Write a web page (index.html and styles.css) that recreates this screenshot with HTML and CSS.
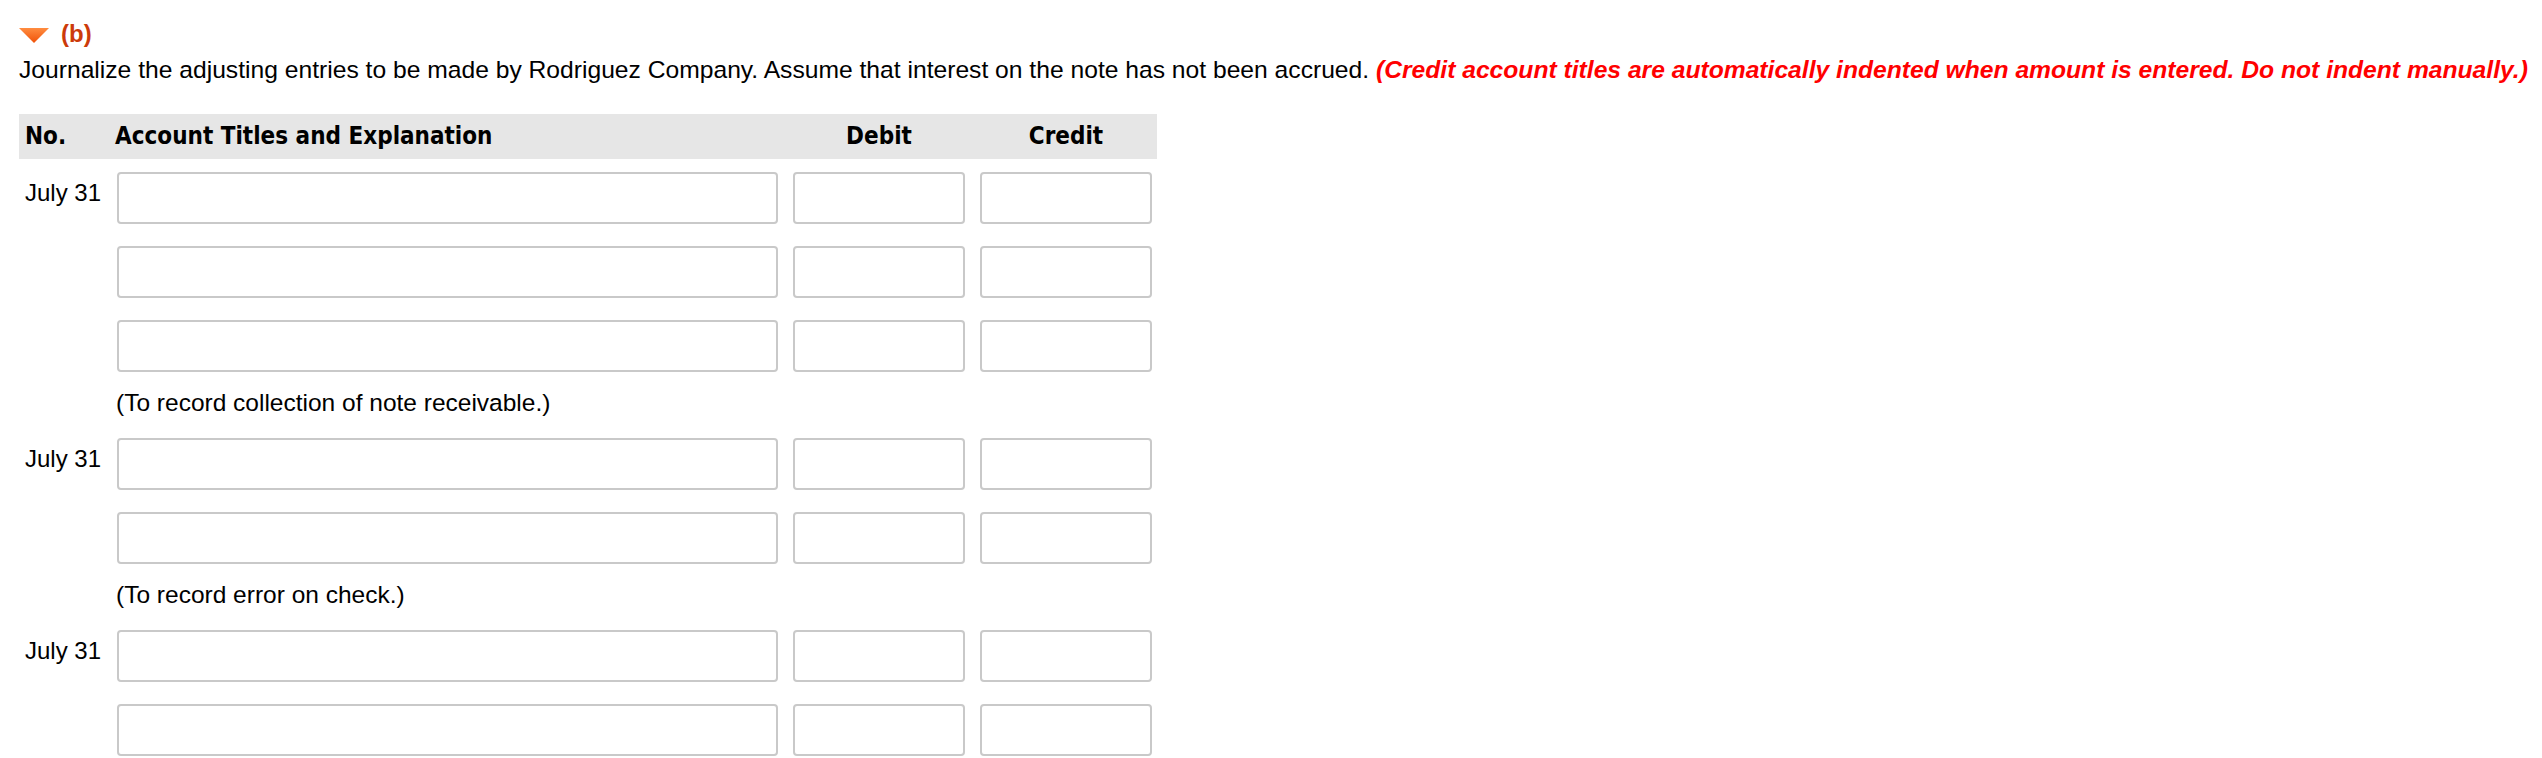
FILE: index.html
```html
<!DOCTYPE html>
<html>
<head>
    <title>Journal entries (b)</title>
    <link rel="stylesheet" href="styles.css">
</head>
<body>
    <div class="part">
        <div class="part-head">
            <svg class="toggle" width="30" height="15" viewBox="0 0 30 15">
                <defs>
                    <linearGradient id="tri" x1="0" y1="0" x2="0" y2="1">
                        <stop offset="0" stop-color="#ff8c40"/>
                        <stop offset="1" stop-color="#f05208"/>
                    </linearGradient>
                </defs>
                <polygon points="0,0 30,0 15,15" fill="url(#tri)"/>
            </svg>
            <span class="part-label">(b)</span>
        </div>

        <p class="instructions">
            Journalize the adjusting entries to be made by Rodriguez Company. Assume that interest on the note has not been accrued.
            <em class="warning">(Credit account titles are automatically indented when amount is entered. Do not indent manually.)</em>
        </p>

        <div class="journal">
            <div class="journal-head">
                <div>No.</div>
                <div class="col-title">Account Titles and Explanation</div>
                <div class="col-amount">Debit</div>
                <div class="col-amount">Credit</div>
            </div>

            <!-- entry 1 -->
            <div class="entry-row first">
                <div class="date">July 31</div>
                <input class="field" type="text">
                <input class="field" type="text">
                <input class="field" type="text">
            </div>
            <div class="entry-row">
                <div></div>
                <input class="field" type="text">
                <input class="field" type="text">
                <input class="field" type="text">
            </div>
            <div class="entry-row">
                <div></div>
                <input class="field" type="text">
                <input class="field" type="text">
                <input class="field" type="text">
            </div>
            <div class="note">
                <div></div>
                <div class="note-text">(To record collection of note receivable.)</div>
            </div>

            <!-- entry 2 -->
            <div class="entry-row after-note">
                <div class="date">July 31</div>
                <input class="field" type="text">
                <input class="field" type="text">
                <input class="field" type="text">
            </div>
            <div class="entry-row">
                <div></div>
                <input class="field" type="text">
                <input class="field" type="text">
                <input class="field" type="text">
            </div>
            <div class="note">
                <div></div>
                <div class="note-text">(To record error on check.)</div>
            </div>

            <!-- entry 3 -->
            <div class="entry-row after-note">
                <div class="date">July 31</div>
                <input class="field" type="text">
                <input class="field" type="text">
                <input class="field" type="text">
            </div>
            <div class="entry-row">
                <div></div>
                <input class="field" type="text">
                <input class="field" type="text">
                <input class="field" type="text">
            </div>
        </div>
    </div>
</body>
</html>
```

FILE: styles.css
```css
:root {
    --text-color: #000000;
    --accent-color: #cc3a0a;
    --warning-color: #ff0000;
    --band-color: #e6e6e6;
    --field-border: #c9c9c9;
}

* {
    margin: 0;
    padding: 0;
    box-sizing: border-box;
}

body {
    font-family: 'Liberation Sans', Helvetica, Arial, sans-serif;
    color: var(--text-color);
    background: #ffffff;
}

.part {
    padding: 20px 0 0 19px;
}

.part-head {
    display: flex;
    align-items: flex-start;
    gap: 12px;
    height: 28px;
}

.toggle {
    margin-top: 8px;
    flex-shrink: 0;
}

.part-label {
    color: var(--accent-color);
    font-weight: bold;
    font-size: 24px;
    line-height: 28px;
}

.instructions {
    margin-top: 7px;
    font-size: 24.65px;
    line-height: 30px;
    white-space: nowrap;
}

.warning {
    color: var(--warning-color);
    font-weight: bold;
    font-style: italic;
}

/* Журнал проводок */
.journal {
    margin-top: 29px;
    width: 1138px;
}

.journal-head,
.entry-row,
.note {
    display: grid;
    grid-template-columns: 77px 661px 172px 172px;
    column-gap: 15px;
    padding: 0 5px 0 6px;
}

.journal-head {
    background: var(--band-color);
    height: 45px;
    line-height: 44px;
    font-family: 'DejaVu Sans Condensed', 'DejaVu Sans', sans-serif;
    font-stretch: condensed;
    font-weight: bold;
    font-size: 24px;
}

.col-title {
    margin-left: -2px;
}

.col-amount {
    text-align: center;
}

.entry-row {
    height: 52px;
    margin-top: 22px;
    font-size: 24px;
}

.entry-row.first {
    margin-top: 13px;
}

.entry-row.after-note {
    margin-top: 26px;
}

.date {
    padding-top: 7px;
}

.field {
    height: 52px;
    width: 100%;
    border: 2px solid var(--field-border);
    border-radius: 4px;
    background: #ffffff;
    font: inherit;
    padding: 0 8px;
}

.note {
    margin-top: 22px;
    height: 18px;
    line-height: 18px;
    font-size: 24.5px;
}

.note-text {
    white-space: nowrap;
    margin-left: -1px;
}
```
